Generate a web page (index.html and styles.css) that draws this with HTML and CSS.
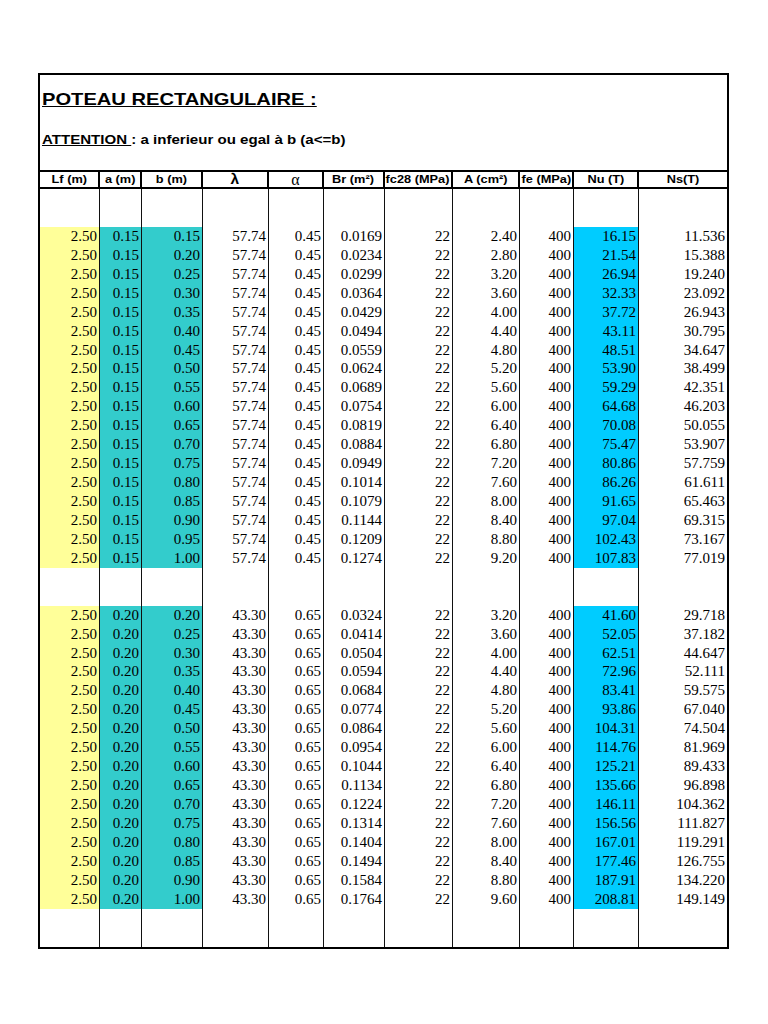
FILE: index.html
```html
<!DOCTYPE html>
<html lang="fr">
<head>
<meta charset="utf-8">
<title>Poteau rectangulaire</title>
<link rel="stylesheet" href="styles.css">
</head>
<body>
<div class="frame">
  <div class="top">
    <div class="title"><span>POTEAU RECTANGULAIRE :</span></div>
    <div class="note"><span><u>ATTENTION </u>: a inferieur ou egal à b (a&lt;=b)</span></div>
  </div>
  <div class="sheet">
    <div class="row head"><span><b>Lf (m)</b></span><span><b>a (m)</b></span><span><b>b (m)</b></span><span><b class="lam">λ</b></span><span><b class="alp">α</b></span><span><b>Br (m²)</b></span><span><b>fc28 (MPa)</b></span><span><b>A (cm²)</b></span><span><b>fe (MPa)</b></span><span><b>Nu (T)</b></span><span><b>Ns(T)</b></span></div>
    <div class="row"><span></span><span></span><span></span><span></span><span></span><span></span><span></span><span></span><span></span><span></span><span></span></div>
    <div class="row"><span></span><span></span><span></span><span></span><span></span><span></span><span></span><span></span><span></span><span></span><span></span></div>
    <div class="row"><span class="y">2.50</span><span class="t">0.15</span><span class="t">0.15</span><span>57.74</span><span>0.45</span><span>0.0169</span><span>22</span><span>2.40</span><span>400</span><span class="b">16.15</span><span>11.536</span></div>
    <div class="row"><span class="y">2.50</span><span class="t">0.15</span><span class="t">0.20</span><span>57.74</span><span>0.45</span><span>0.0234</span><span>22</span><span>2.80</span><span>400</span><span class="b">21.54</span><span>15.388</span></div>
    <div class="row"><span class="y">2.50</span><span class="t">0.15</span><span class="t">0.25</span><span>57.74</span><span>0.45</span><span>0.0299</span><span>22</span><span>3.20</span><span>400</span><span class="b">26.94</span><span>19.240</span></div>
    <div class="row"><span class="y">2.50</span><span class="t">0.15</span><span class="t">0.30</span><span>57.74</span><span>0.45</span><span>0.0364</span><span>22</span><span>3.60</span><span>400</span><span class="b">32.33</span><span>23.092</span></div>
    <div class="row"><span class="y">2.50</span><span class="t">0.15</span><span class="t">0.35</span><span>57.74</span><span>0.45</span><span>0.0429</span><span>22</span><span>4.00</span><span>400</span><span class="b">37.72</span><span>26.943</span></div>
    <div class="row"><span class="y">2.50</span><span class="t">0.15</span><span class="t">0.40</span><span>57.74</span><span>0.45</span><span>0.0494</span><span>22</span><span>4.40</span><span>400</span><span class="b">43.11</span><span>30.795</span></div>
    <div class="row"><span class="y">2.50</span><span class="t">0.15</span><span class="t">0.45</span><span>57.74</span><span>0.45</span><span>0.0559</span><span>22</span><span>4.80</span><span>400</span><span class="b">48.51</span><span>34.647</span></div>
    <div class="row"><span class="y">2.50</span><span class="t">0.15</span><span class="t">0.50</span><span>57.74</span><span>0.45</span><span>0.0624</span><span>22</span><span>5.20</span><span>400</span><span class="b">53.90</span><span>38.499</span></div>
    <div class="row"><span class="y">2.50</span><span class="t">0.15</span><span class="t">0.55</span><span>57.74</span><span>0.45</span><span>0.0689</span><span>22</span><span>5.60</span><span>400</span><span class="b">59.29</span><span>42.351</span></div>
    <div class="row"><span class="y">2.50</span><span class="t">0.15</span><span class="t">0.60</span><span>57.74</span><span>0.45</span><span>0.0754</span><span>22</span><span>6.00</span><span>400</span><span class="b">64.68</span><span>46.203</span></div>
    <div class="row"><span class="y">2.50</span><span class="t">0.15</span><span class="t">0.65</span><span>57.74</span><span>0.45</span><span>0.0819</span><span>22</span><span>6.40</span><span>400</span><span class="b">70.08</span><span>50.055</span></div>
    <div class="row"><span class="y">2.50</span><span class="t">0.15</span><span class="t">0.70</span><span>57.74</span><span>0.45</span><span>0.0884</span><span>22</span><span>6.80</span><span>400</span><span class="b">75.47</span><span>53.907</span></div>
    <div class="row"><span class="y">2.50</span><span class="t">0.15</span><span class="t">0.75</span><span>57.74</span><span>0.45</span><span>0.0949</span><span>22</span><span>7.20</span><span>400</span><span class="b">80.86</span><span>57.759</span></div>
    <div class="row"><span class="y">2.50</span><span class="t">0.15</span><span class="t">0.80</span><span>57.74</span><span>0.45</span><span>0.1014</span><span>22</span><span>7.60</span><span>400</span><span class="b">86.26</span><span>61.611</span></div>
    <div class="row"><span class="y">2.50</span><span class="t">0.15</span><span class="t">0.85</span><span>57.74</span><span>0.45</span><span>0.1079</span><span>22</span><span>8.00</span><span>400</span><span class="b">91.65</span><span>65.463</span></div>
    <div class="row"><span class="y">2.50</span><span class="t">0.15</span><span class="t">0.90</span><span>57.74</span><span>0.45</span><span>0.1144</span><span>22</span><span>8.40</span><span>400</span><span class="b">97.04</span><span>69.315</span></div>
    <div class="row"><span class="y">2.50</span><span class="t">0.15</span><span class="t">0.95</span><span>57.74</span><span>0.45</span><span>0.1209</span><span>22</span><span>8.80</span><span>400</span><span class="b">102.43</span><span>73.167</span></div>
    <div class="row"><span class="y">2.50</span><span class="t">0.15</span><span class="t">1.00</span><span>57.74</span><span>0.45</span><span>0.1274</span><span>22</span><span>9.20</span><span>400</span><span class="b">107.83</span><span>77.019</span></div>
    <div class="row"><span></span><span></span><span></span><span></span><span></span><span></span><span></span><span></span><span></span><span></span><span></span></div>
    <div class="row"><span></span><span></span><span></span><span></span><span></span><span></span><span></span><span></span><span></span><span></span><span></span></div>
    <div class="row"><span class="y">2.50</span><span class="t">0.20</span><span class="t">0.20</span><span>43.30</span><span>0.65</span><span>0.0324</span><span>22</span><span>3.20</span><span>400</span><span class="b">41.60</span><span>29.718</span></div>
    <div class="row"><span class="y">2.50</span><span class="t">0.20</span><span class="t">0.25</span><span>43.30</span><span>0.65</span><span>0.0414</span><span>22</span><span>3.60</span><span>400</span><span class="b">52.05</span><span>37.182</span></div>
    <div class="row"><span class="y">2.50</span><span class="t">0.20</span><span class="t">0.30</span><span>43.30</span><span>0.65</span><span>0.0504</span><span>22</span><span>4.00</span><span>400</span><span class="b">62.51</span><span>44.647</span></div>
    <div class="row"><span class="y">2.50</span><span class="t">0.20</span><span class="t">0.35</span><span>43.30</span><span>0.65</span><span>0.0594</span><span>22</span><span>4.40</span><span>400</span><span class="b">72.96</span><span>52.111</span></div>
    <div class="row"><span class="y">2.50</span><span class="t">0.20</span><span class="t">0.40</span><span>43.30</span><span>0.65</span><span>0.0684</span><span>22</span><span>4.80</span><span>400</span><span class="b">83.41</span><span>59.575</span></div>
    <div class="row"><span class="y">2.50</span><span class="t">0.20</span><span class="t">0.45</span><span>43.30</span><span>0.65</span><span>0.0774</span><span>22</span><span>5.20</span><span>400</span><span class="b">93.86</span><span>67.040</span></div>
    <div class="row"><span class="y">2.50</span><span class="t">0.20</span><span class="t">0.50</span><span>43.30</span><span>0.65</span><span>0.0864</span><span>22</span><span>5.60</span><span>400</span><span class="b">104.31</span><span>74.504</span></div>
    <div class="row"><span class="y">2.50</span><span class="t">0.20</span><span class="t">0.55</span><span>43.30</span><span>0.65</span><span>0.0954</span><span>22</span><span>6.00</span><span>400</span><span class="b">114.76</span><span>81.969</span></div>
    <div class="row"><span class="y">2.50</span><span class="t">0.20</span><span class="t">0.60</span><span>43.30</span><span>0.65</span><span>0.1044</span><span>22</span><span>6.40</span><span>400</span><span class="b">125.21</span><span>89.433</span></div>
    <div class="row"><span class="y">2.50</span><span class="t">0.20</span><span class="t">0.65</span><span>43.30</span><span>0.65</span><span>0.1134</span><span>22</span><span>6.80</span><span>400</span><span class="b">135.66</span><span>96.898</span></div>
    <div class="row"><span class="y">2.50</span><span class="t">0.20</span><span class="t">0.70</span><span>43.30</span><span>0.65</span><span>0.1224</span><span>22</span><span>7.20</span><span>400</span><span class="b">146.11</span><span>104.362</span></div>
    <div class="row"><span class="y">2.50</span><span class="t">0.20</span><span class="t">0.75</span><span>43.30</span><span>0.65</span><span>0.1314</span><span>22</span><span>7.60</span><span>400</span><span class="b">156.56</span><span>111.827</span></div>
    <div class="row"><span class="y">2.50</span><span class="t">0.20</span><span class="t">0.80</span><span>43.30</span><span>0.65</span><span>0.1404</span><span>22</span><span>8.00</span><span>400</span><span class="b">167.01</span><span>119.291</span></div>
    <div class="row"><span class="y">2.50</span><span class="t">0.20</span><span class="t">0.85</span><span>43.30</span><span>0.65</span><span>0.1494</span><span>22</span><span>8.40</span><span>400</span><span class="b">177.46</span><span>126.755</span></div>
    <div class="row"><span class="y">2.50</span><span class="t">0.20</span><span class="t">0.90</span><span>43.30</span><span>0.65</span><span>0.1584</span><span>22</span><span>8.80</span><span>400</span><span class="b">187.91</span><span>134.220</span></div>
    <div class="row"><span class="y">2.50</span><span class="t">0.20</span><span class="t">1.00</span><span>43.30</span><span>0.65</span><span>0.1764</span><span>22</span><span>9.60</span><span>400</span><span class="b">208.81</span><span>149.149</span></div>
    <div class="row"><span></span><span></span><span></span><span></span><span></span><span></span><span></span><span></span><span></span><span></span><span></span></div>
    <div class="row"><span></span><span></span><span></span><span></span><span></span><span></span><span></span><span></span><span></span><span></span><span></span></div>
  </div>
</div>
</body>
</html>
```

FILE: styles.css
```css
* { box-sizing: border-box; }

body {
  margin: 0;
  background: #fff;
  color: #000;
  font-family: "Liberation Serif", "Times New Roman", serif;
}

.frame {
  width: 691px;
  margin: 73px 0 0 38px;
  border: 2px solid #000;
}

.top {
  height: 95px;
  padding: 14px 0 0 2px;
  font-family: "Liberation Sans", Arial, sans-serif;
  font-weight: bold;
}

.title {
  height: 20px;
  line-height: 20px;
  font-size: 16.5px;
}

.title span {
  display: inline-block;
  text-decoration: underline;
  transform: scaleX(1.22);
  transform-origin: left center;
}

.note {
  margin-top: 23px;
  height: 17px;
  line-height: 17px;
  font-size: 12.5px;
}

.note span {
  display: inline-block;
  transform: scaleX(1.205);
  transform-origin: left center;
}

.note u { text-decoration: underline; }

.row {
  display: grid;
  grid-template-columns: 60px 42px 61px 66px 55px 61px 68px 67px 54px 65px 88px;
  height: 18.95px;
}

.row > span {
  display: block;
  border-right: 1px solid #111;
  text-align: right;
  padding-right: 2px;
  font-size: 15px;
  line-height: 18.5px;
  white-space: nowrap;
  overflow: hidden;
}

.row > span:last-child { border-right: none; }

.row.head {
  height: 19px;
  border-top: 2px solid #000;
  border-bottom: 2px solid #000;
}

.row.head > span {
  border-right: 2px solid #000;
  text-align: center;
  padding: 0;
  font-family: "Liberation Sans", Arial, sans-serif;
  font-size: 11px;
  line-height: 15px;
  overflow: visible;
}

.row.head > span:last-child { border-right: none; }

.row.head b {
  display: inline-block;
  transform: scaleX(1.16);
}

.row.head b.lam {
  font-size: 14px;
  transform: scaleX(1.1);
}

.row.head b.alp {
  font-family: "Liberation Serif", "Times New Roman", serif;
  font-weight: normal;
  font-size: 16px;
  transform: none;
}

.y { background: #ffff99; }
.t { background: #33cccc; }
.b { background: #00ccff; }
```
